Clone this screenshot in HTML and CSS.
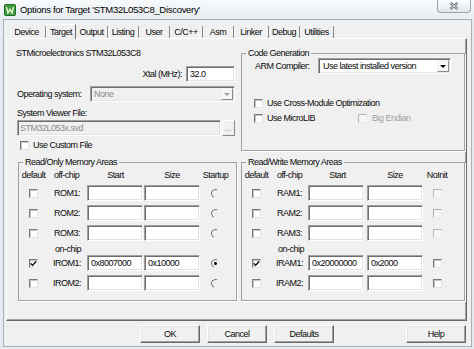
FILE: index.html
```html
<!DOCTYPE html>
<html>
<head>
    <meta charset="UTF-8">
    <meta name="viewport" content="width=device-width, initial-scale=1.0">
    <title>Options for Target</title>
    <link rel="stylesheet" href="styles.css">
</head>
<body>
    <div class="window">
        <div class="titlebar">
            <svg class="app-icon" viewBox="0 0 12 12" width="12" height="12">
                <rect x="0.5" y="0.5" width="11" height="11" rx="1" fill="#3f9a3c" stroke="#1f6a24"/>
                <path d="M2.4 3 L4 9 L6 5.2 L8 9 L9.6 3" fill="none" stroke="#f4f7d8" stroke-width="1.3"/>
            </svg>
            <span class="title">Options for Target 'STM32L053C8_Discovery'</span>
            <div class="close-btn">
                <svg viewBox="0 0 10 8" width="10" height="8">
                    <path d="M1.5 1 L8.5 7 M8.5 1 L1.5 7" stroke="#66707b" stroke-width="2.4"/>
                    <path d="M1.5 1 L8.5 7 M8.5 1 L1.5 7" stroke="#fff" stroke-width="0.8"/>
                </svg>
            </div>
        </div>

        <div class="client">
            <div class="tabs">
                <div class="tab">Device</div>
                <div class="tab active">Target</div>
                <div class="tab">Output</div>
                <div class="tab">Listing</div>
                <div class="tab">User</div>
                <div class="tab">C/C++</div>
                <div class="tab">Asm</div>
                <div class="tab">Linker</div>
                <div class="tab">Debug</div>
                <div class="tab">Utilities</div>
            </div>

            <div class="panel">
                <div class="top-area">
                    <div class="target-left">
                        <div class="device-name">STMicroelectronics STM32L053C8</div>
                        <div class="xtal-row">
                            <label>Xtal (MHz):</label>
                            <div class="edit xtal">32.0</div>
                        </div>
                        <div class="os-row">
                            <label>Operating system:</label>
                            <div class="combo disabled os">
                                <span class="value">None</span>
                                <span class="combo-arrow"></span>
                            </div>
                        </div>
                        <div class="svf-label">System Viewer File:</div>
                        <div class="svd-row">
                            <div class="edit disabled svd">STM32L053x.svd</div>
                            <div class="browse-btn">...</div>
                        </div>
                        <div class="check-row">
                            <span class="check"></span>Use Custom File
                        </div>
                    </div>

                    <fieldset class="group codegen">
                        <legend>Code Generation</legend>
                        <div class="group-body">
                            <div class="arm-row">
                                <label>ARM Compiler:</label>
                                <div class="combo compiler">
                                    <span class="value">Use latest installed version</span>
                                    <span class="combo-arrow"></span>
                                </div>
                            </div>
                            <div class="check-row first">
                                <span class="check"></span>Use Cross-Module Optimization
                            </div>
                            <div class="check-row">
                                <div class="microlib"><span class="check"></span>Use MicroLIB</div>
                                <span class="check dim"></span><span class="disabled-text">Big Endian</span>
                            </div>
                        </div>
                    </fieldset>
                </div>

                <div class="memory-area">
                    <fieldset class="group mem rom">
                        <legend>Read/Only Memory Areas</legend>
                        <div class="mem-grid">
                            <span class="hdr">default</span>
                            <span class="hdr off">off-chip</span>
                            <span class="hdr">Start</span>
                            <span class="hdr">Size</span>
                            <span class="hdr">Startup</span>

                            <span class="cell"><span class="check"></span></span>
                            <span class="rlabel">ROM1:</span>
                            <div class="edit"></div>
                            <div class="edit"></div>
                            <span class="cell"><span class="radio"></span></span>

                            <span class="cell"><span class="check"></span></span>
                            <span class="rlabel">ROM2:</span>
                            <div class="edit"></div>
                            <div class="edit"></div>
                            <span class="cell"><span class="radio"></span></span>

                            <span class="cell"><span class="check"></span></span>
                            <span class="rlabel">ROM3:</span>
                            <div class="edit"></div>
                            <div class="edit"></div>
                            <span class="cell"><span class="radio"></span></span>

                            <span class="onchip">on-chip</span>

                            <span class="cell"><span class="check checked"><svg viewBox="0 0 7 7" width="7" height="7"><polyline points="0.8,3.4 2.6,5.4 6.2,1.2" fill="none" stroke="#111" stroke-width="1.4"/></svg></span></span>
                            <span class="rlabel ion">IROM1:</span>
                            <div class="edit">0x8007000</div>
                            <div class="edit">0x10000</div>
                            <span class="cell"><span class="radio on"></span></span>

                            <span class="cell"><span class="check"></span></span>
                            <span class="rlabel ion">IROM2:</span>
                            <div class="edit"></div>
                            <div class="edit"></div>
                            <span class="cell"><span class="radio"></span></span>
                        </div>
                    </fieldset>

                    <fieldset class="group mem ram">
                        <legend>Read/Write Memory Areas</legend>
                        <div class="mem-grid">
                            <span class="hdr">default</span>
                            <span class="hdr off">off-chip</span>
                            <span class="hdr">Start</span>
                            <span class="hdr">Size</span>
                            <span class="hdr">NoInit</span>

                            <span class="cell"><span class="check"></span></span>
                            <span class="rlabel">RAM1:</span>
                            <div class="edit"></div>
                            <div class="edit"></div>
                            <span class="cell"><span class="check dim"></span></span>

                            <span class="cell"><span class="check"></span></span>
                            <span class="rlabel">RAM2:</span>
                            <div class="edit"></div>
                            <div class="edit"></div>
                            <span class="cell"><span class="check dim"></span></span>

                            <span class="cell"><span class="check"></span></span>
                            <span class="rlabel">RAM3:</span>
                            <div class="edit"></div>
                            <div class="edit"></div>
                            <span class="cell"><span class="check dim"></span></span>

                            <span class="onchip">on-chip</span>

                            <span class="cell"><span class="check checked"><svg viewBox="0 0 7 7" width="7" height="7"><polyline points="0.8,3.4 2.6,5.4 6.2,1.2" fill="none" stroke="#111" stroke-width="1.4"/></svg></span></span>
                            <span class="rlabel ion">IRAM1:</span>
                            <div class="edit">0x20000000</div>
                            <div class="edit">0x2000</div>
                            <span class="cell"><span class="check"></span></span>

                            <span class="cell"><span class="check"></span></span>
                            <span class="rlabel ion">IRAM2:</span>
                            <div class="edit"></div>
                            <div class="edit"></div>
                            <span class="cell"><span class="check"></span></span>
                        </div>
                    </fieldset>
                </div>
            </div>

            <div class="buttons">
                <div class="btn">OK</div>
                <div class="btn">Cancel</div>
                <div class="btn">Defaults</div>
                <div class="btn help">Help</div>
            </div>
        </div>
    </div>
</body>
</html>
```

FILE: styles.css
```css
* {
    box-sizing: border-box;
}
body {
    margin: 0;
    font-family: "Liberation Sans", Arial, sans-serif;
    font-size: 9px;
    letter-spacing: -0.5px;
    color: #0a0a0a;
    background: #e6ebf0;
}
.window {
    width: 474px;
    height: 349px;
    display: flex;
    flex-direction: column;
    background: #e6ebf0;
    overflow: hidden;
}

/* title bar */
.titlebar {
    height: 19px;
    flex: none;
    display: flex;
    align-items: center;
    background: linear-gradient(#f8fafb, #e8edf2);
}
.app-icon {
    margin-left: 4px;
    flex: none;
}
.title {
    margin-left: 4px;
    font-size: 9.5px;
    letter-spacing: -0.3px;
    color: #000;
    white-space: nowrap;
}
.close-btn {
    margin-left: auto;
    margin-right: 3px;
    align-self: flex-start;
    width: 34px;
    height: 13px;
    border: 1px solid #9aa3ad;
    border-top: none;
    border-radius: 0 0 4px 4px;
    background: linear-gradient(#fcfdfe, #e2e7ec);
    display: flex;
    align-items: center;
    justify-content: center;
}

/* client area */
.client {
    flex: 1;
    margin: 0 2px 2px 3px;
    border: 1px solid #a9b0b8;
    background: #f0f0f0;
    display: flex;
    flex-direction: column;
    padding-bottom: 3px;
}
.tabs {
    height: 18px;
    flex: none;
    display: flex;
    align-items: flex-end;
    padding-left: 4px;
}
.tab {
    height: 12px;
    padding-top: 1px;
    line-height: 11px;
    text-align: center;
    white-space: nowrap;
    border-right: 1px solid #8a8a8a;
}
.tab.active {
    height: 15px;
    margin-bottom: -1px;
    line-height: 12px;
    border-top: 1px solid #fff;
    border-left: 1px solid #fff;
    border-right: 1px solid #696969;
    background: #f0f0f0;
    position: relative;
    z-index: 1;
}
.tab:nth-child(1) { width: 38px; }
.tab:nth-child(2) { width: 30px; }
.tab:nth-child(3) { width: 32px; }
.tab:nth-child(4) { width: 31px; }
.tab:nth-child(5) { width: 31px; }
.tab:nth-child(6) { width: 33px; }
.tab:nth-child(7) { width: 31px; }
.tab:nth-child(8) { width: 35px; }
.tab:nth-child(9) { width: 31px; }
.tab:nth-child(10) { width: 34px; }

.panel {
    height: 283px;
    flex: none;
    margin: 0 4px 0 2px;
    border: 1px solid;
    border-color: #fff #696969 #696969 #fff;
    box-shadow: inset -1px -1px 0 #a0a0a0;
    padding: 9px 0 0 9px;
    display: flex;
    flex-direction: column;
}

/* common controls */
.edit {
    height: 16px;
    background: #fff;
    border: 1px solid;
    border-color: #a0a0a0 #fff #fff #a0a0a0;
    box-shadow: inset 1px 1px 0 #6e6e6e, inset -1px -1px 0 #e3e3e3;
    padding-left: 3px;
    line-height: 14px;
    white-space: nowrap;
    overflow: hidden;
}
.edit.disabled {
    background: #f0f0f0;
    color: #8d8d8d;
}
.combo {
    height: 16px;
    display: flex;
    align-items: center;
    background: #fff;
    border: 1px solid;
    border-color: #a0a0a0 #fff #fff #a0a0a0;
    box-shadow: inset 1px 1px 0 #6e6e6e, inset -1px -1px 0 #e3e3e3;
    padding-left: 3px;
    line-height: 14px;
    white-space: nowrap;
}
.combo .value {
    flex: 1;
}
.combo.disabled {
    background: #f0f0f0;
    color: #8d8d8d;
}
.combo-arrow {
    width: 12px;
    height: 12px;
    margin-right: 1px;
    border: 1px solid;
    border-color: #f4f4f4 #8a8a8a #8a8a8a #f4f4f4;
    background: #f6f6f6;
    display: flex;
    align-items: center;
    justify-content: center;
}
.combo-arrow::after {
    content: '';
    border-left: 3px solid transparent;
    border-right: 3px solid transparent;
    border-top: 3px solid #000;
}
.combo.disabled .combo-arrow::after {
    border-top-color: #a0a0a0;
}
.check {
    width: 9px;
    height: 9px;
    flex: none;
    display: inline-flex;
    align-items: center;
    justify-content: center;
    background: #fff;
    border: 1px solid;
    border-color: #7a7a7a #e4e4e4 #e4e4e4 #7a7a7a;
    box-shadow: inset 1px 1px 0 #c4c4c4;
}
.check.dim {
    border-color: #b0b0b0 #ececec #ececec #b0b0b0;
    box-shadow: none;
    background: #f7f7f7;
}
.radio {
    width: 9px;
    height: 9px;
    border-radius: 50%;
    background: transparent;
    border: 1px solid;
    border-color: #6e6e6e transparent transparent #6e6e6e;
    transform: rotate(-20deg);
    display: inline-flex;
    align-items: center;
    justify-content: center;
}
.radio.on::after {
    content: '';
    width: 3px;
    height: 3px;
    border-radius: 50%;
    background: #111;
}
.check-row {
    display: flex;
    align-items: center;
    line-height: 11px;
    white-space: nowrap;
}
.check-row .check {
    margin-right: 4px;
}
.disabled-text {
    color: #a0a0a0;
}

/* target settings */
.top-area {
    display: flex;
    gap: 6px;
}
.target-left {
    width: 219px;
    flex: none;
    display: flex;
    flex-direction: column;
}
.device-name {
    line-height: 11px;
    white-space: nowrap;
}
.xtal-row {
    margin-top: 7px;
    height: 16px;
    display: flex;
    align-items: center;
}
.xtal-row label {
    flex: 1;
    text-align: right;
    padding-right: 4px;
}
.xtal {
    width: 49px;
}
.os-row {
    margin-top: 4px;
    height: 16px;
    display: flex;
    align-items: center;
}
.os-row label {
    flex: 1;
    padding-left: 1px;
}
.os {
    width: 145px;
}
.svf-label {
    margin-top: 6px;
    line-height: 11px;
    padding-left: 1px;
}
.svd-row {
    margin-top: 1px;
    display: flex;
    gap: 1px;
    padding-left: 1px;
}
.svd {
    width: 204px;
    padding-left: 2px;
}
.browse-btn {
    width: 13px;
    height: 16px;
    border: 1px solid;
    border-color: #fff #8a8a8a #8a8a8a #fff;
    background: #f0f0f0;
    color: #8d8d8d;
    font-size: 8px;
    letter-spacing: 0;
    line-height: 16px;
    text-align: center;
}
.target-left .check-row {
    margin-top: 4px;
    padding-left: 4px;
}

/* group boxes */
fieldset.group {
    margin: 0;
    padding: 0;
    min-width: 0;
    border: 1px solid #a0a0a0;
    box-shadow: 1px 1px 0 #fff;
}
fieldset.group legend {
    margin-left: 4px;
    padding: 0 2px;
    line-height: 11px;
    white-space: nowrap;
}
.codegen {
    width: 224px;
    flex: none;
    margin-top: 9px;
}
.codegen .group-body {
    padding: 0 0 20px 12px;
}
.arm-row {
    margin-top: -1px;
    height: 16px;
    display: flex;
    align-items: center;
}
.arm-row label {
    width: 64px;
    padding-left: 1px;
    white-space: nowrap;
}
.compiler {
    width: 133px;
    padding-left: 4px;
}
.codegen .check-row.first {
    margin-top: 24px;
}
.codegen .check-row + .check-row {
    margin-top: 4px;
}
.microlib {
    width: 104px;
    display: flex;
    align-items: center;
}
.microlib + .check {
    margin-right: 5px;
}

/* memory areas */
.memory-area {
    margin-top: 6px;
    padding-left: 2px;
    display: flex;
    gap: 4px;
}
.mem.rom {
    width: 219px;
}
.mem.ram {
    width: 224px;
}
.mem-grid {
    display: grid;
    grid-template-rows: 15px 20px 20px 18px 12px 20px 16px;
    align-items: start;
    padding: 2px 0 9px 0;
}
.rom .mem-grid {
    grid-template-columns: 29px 39px 57px 56px 31px;
}
.ram .mem-grid {
    grid-template-columns: 29px 37px 59px 56px 28px;
}
.mem-grid .edit {
    width: 56px;
}
.hdr {
    line-height: 11px;
    text-align: center;
    white-space: nowrap;
}
.hdr.off {
    text-align: left;
    padding-left: 6px;
}
.cell {
    height: 16px;
    display: flex;
    align-items: center;
    justify-content: center;
}
.rlabel {
    line-height: 16px;
    padding-left: 6px;
    white-space: nowrap;
}
.rlabel.ion {
    padding-left: 5px;
}
.onchip {
    grid-column: 2 / -1;
    line-height: 12px;
    padding-left: 7px;
}

/* dialog buttons */
.buttons {
    margin-top: 4px;
    padding: 0 5px 0 136px;
    display: flex;
    gap: 7px;
}
.btn {
    width: 60px;
    height: 18px;
    border: 1px solid;
    border-color: #fff #696969 #696969 #fff;
    box-shadow: inset -1px -1px 0 #a0a0a0, inset 1px 1px 0 #e3e3e3;
    background: #f0f0f0;
    line-height: 16px;
    text-align: center;
}
.btn.help {
    margin-left: auto;
}
```
